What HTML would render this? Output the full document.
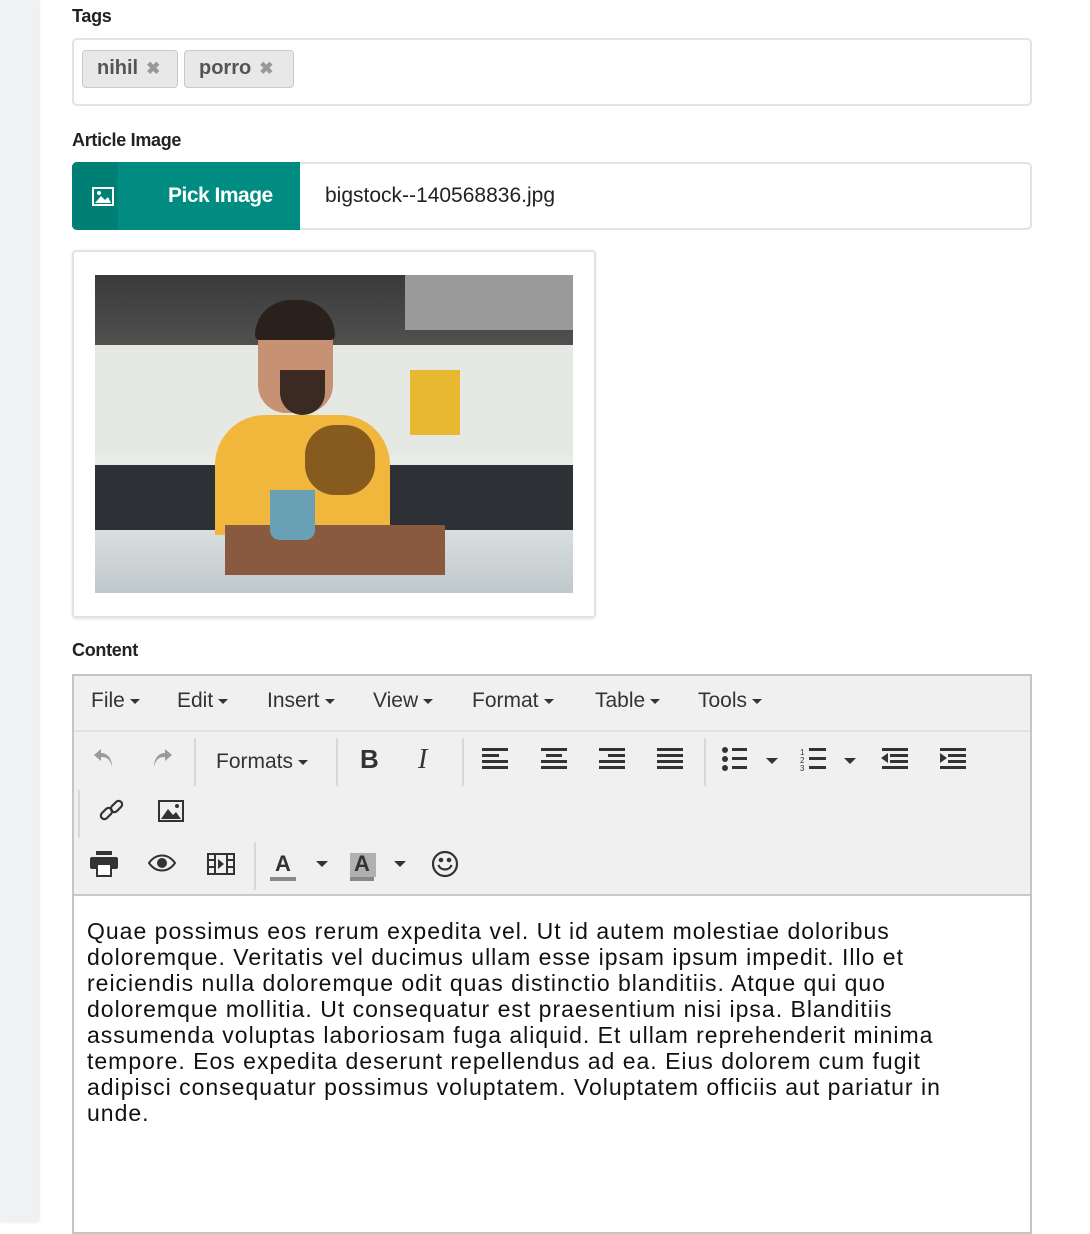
<!DOCTYPE html>
<html><head><meta charset="utf-8"><style>
*{margin:0;padding:0;box-sizing:border-box}
body{width:1090px;height:1222px;overflow:hidden;background:#fff;font-family:"Liberation Sans",sans-serif;position:relative}
.side{position:absolute;left:0;top:0;width:38px;height:1222px;background:#eef2f5;box-shadow:1px 0 3px rgba(0,0,0,.12)}
.abs{position:absolute}
.lbl{position:absolute;left:72px;font-size:18px;font-weight:bold;color:#222;letter-spacing:-0.3px}
.tag{position:absolute;top:50px;height:38px;background:#e8e8e8;border:1px solid #c9c9c9;border-radius:4px;font-size:20px;color:#555;padding:6px 0 0 14px;font-weight:bold}
.tag b{color:#999;font-size:17px;margin-left:8px}
.menu span{position:absolute;top:689px;font-size:21px;color:#333}
.caret{display:inline-block;width:0;height:0;border-left:5px solid transparent;border-right:5px solid transparent;border-top:5px solid #333;vertical-align:middle;margin-left:5px}
.sep{position:absolute;width:2px;background:#d8d8d8}
svg{position:absolute}
</style></head><body>
<div class="side"></div>
<div class="lbl" style="top:6px">Tags</div>
<div class="abs" style="left:72px;top:38px;width:960px;height:68px;border:2px solid #e2e2e2;border-radius:5px"></div>
<div class="tag" style="left:82px;width:96px">nihil<b>✖</b></div>
<div class="tag" style="left:184px;width:110px">porro<b>✖</b></div>
<div class="lbl" style="top:130px">Article Image</div>
<div class="abs" style="left:72px;top:162px;width:960px;height:68px;border:2px solid #e2e2e2;border-radius:5px"></div>
<div class="abs" style="left:72px;top:162px;width:228px;height:68px;background:#008c80;border-radius:5px 0 0 5px"></div>
<div class="abs" style="left:72px;top:162px;width:46px;height:68px;background:#007f74;border-radius:5px 0 0 5px"></div>
<svg style="left:92px;top:187px" width="22" height="19" viewBox="0 0 22 19"><rect x="1" y="1" width="20" height="17" fill="none" stroke="#fff" stroke-width="2"/><path d="M3 16 L9 9 L13 13 L16 10 L19 16Z" fill="#fff"/><circle cx="7" cy="6" r="2" fill="#fff"/></svg>
<div class="abs" style="left:168px;top:184px;color:#fff;font-size:21px;font-weight:bold;letter-spacing:-0.5px">Pick Image</div>
<div class="abs" style="left:325px;top:184px;color:#222;font-size:21px">bigstock--140568836.jpg</div>
<div class="abs" style="left:72px;top:250px;width:524px;height:368px;border:2px solid #e2e2e2;border-radius:4px;box-shadow:0 1px 3px rgba(0,0,0,.1)"></div>
<div class="abs" style="left:95px;top:275px;width:478px;height:318px;overflow:hidden;background:#e9ece8">
 <div class="abs" style="left:0;top:0;width:478px;height:70px;background:linear-gradient(#3a3a3a,#505050)"></div>
 <div class="abs" style="left:310px;top:0;width:168px;height:55px;background:#9a9a9a"></div>
 <div class="abs" style="left:0;top:70px;width:478px;height:110px;background:#e6e8e4"></div>
 <div class="abs" style="left:0;top:190px;width:478px;height:70px;background:#2d3035"></div>
 <div class="abs" style="left:0;top:255px;width:478px;height:63px;background:linear-gradient(#d9dfe0,#bfc8cb)"></div>
 <div class="abs" style="left:315px;top:95px;width:50px;height:65px;background:#e8b830"></div>
 <div class="abs" style="left:120px;top:140px;width:175px;height:120px;background:#f0b73c;border-radius:50px 50px 0 0"></div>
 <div class="abs" style="left:163px;top:28px;width:75px;height:110px;background:#c79273;border-radius:40px 40px 30px 30px"></div>
 <div class="abs" style="left:160px;top:25px;width:80px;height:40px;background:#2a211c;border-radius:40px 40px 5px 5px"></div>
 <div class="abs" style="left:185px;top:95px;width:45px;height:45px;background:#3a2a22;border-radius:0 0 25px 25px"></div>
 <div class="abs" style="left:130px;top:250px;width:220px;height:50px;background:#8a5a40"></div>
 <div class="abs" style="left:175px;top:215px;width:45px;height:50px;background:#6aa0b5;border-radius:0 0 10px 10px"></div>
 <div class="abs" style="left:210px;top:150px;width:70px;height:70px;background:rgba(90,50,20,.7);border-radius:30px"></div>
</div>
<div class="lbl" style="top:640px">Content</div>
<div class="abs" style="left:72px;top:674px;width:960px;height:560px;border:2px solid #c5c5c5"></div>
<div class="abs" style="left:74px;top:676px;width:956px;height:220px;background:#f0f0f0;border-bottom:2px solid #c9c9c9"></div>
<div class="abs" style="left:74px;top:730px;width:956px;height:2px;background:#e2e2e2"></div>
<div class="menu">
<span style="left:91px">File<i class="caret"></i></span>
<span style="left:177px">Edit<i class="caret"></i></span>
<span style="left:267px">Insert<i class="caret"></i></span>
<span style="left:373px">View<i class="caret"></i></span>
<span style="left:472px">Format<i class="caret"></i></span>
<span style="left:595px">Table<i class="caret"></i></span>
<span style="left:698px">Tools<i class="caret"></i></span>
</div>
<div class="sep" style="left:194px;top:738px;height:48px"></div>
<div class="sep" style="left:336px;top:738px;height:48px"></div>
<div class="sep" style="left:462px;top:738px;height:48px"></div>
<div class="sep" style="left:704px;top:738px;height:48px"></div>
<div class="sep" style="left:78px;top:790px;height:48px"></div>
<div class="sep" style="left:254px;top:842px;height:48px"></div>
<svg style="left:92px;top:747px" width="24" height="22" viewBox="0 0 24 22"><path d="M9 2 L2 8 L9 14 L9 10 C15 10 18 12 20 20 C20 12 16 6 9 6Z" fill="#9a9a9a"/></svg>
<svg style="left:150px;top:747px" width="24" height="22" viewBox="0 0 24 22"><path d="M15 2 L22 8 L15 14 L15 10 C9 10 6 12 4 20 C4 12 8 6 15 6Z" fill="#9a9a9a"/></svg>
<div class="abs" style="left:216px;top:750px;font-size:21px;color:#333">Formats<i class="caret"></i></div>
<div class="abs" style="left:360px;top:744px;font-size:26px;font-weight:bold;color:#333">B</div>
<div class="abs" style="left:418px;top:744px;font-size:28px;font-style:italic;font-family:'Liberation Serif',serif;color:#333">I</div>
<svg style="left:482px;top:748px" width="210" height="22" viewBox="0 0 210 22" fill="#333">
<rect x="0" y="0" width="26" height="3"/><rect x="0" y="6" width="17" height="3"/><rect x="0" y="12" width="26" height="3"/><rect x="0" y="18" width="26" height="3"/>
<rect x="59" y="0" width="26" height="3"/><rect x="64" y="6" width="16" height="3"/><rect x="59" y="12" width="26" height="3"/><rect x="59" y="18" width="26" height="3"/>
<rect x="117" y="0" width="26" height="3"/><rect x="126" y="6" width="17" height="3"/><rect x="117" y="12" width="26" height="3"/><rect x="117" y="18" width="26" height="3"/>
<rect x="175" y="0" width="26" height="3"/><rect x="175" y="6" width="26" height="3"/><rect x="175" y="12" width="26" height="3"/><rect x="175" y="18" width="26" height="3"/>
</svg>
<svg style="left:720px;top:746px" width="260" height="26" viewBox="0 0 260 26" fill="#333">
<circle cx="5" cy="4" r="3"/><circle cx="5" cy="13" r="3"/><circle cx="5" cy="22" r="3"/><rect x="12" y="2" width="15" height="3"/><rect x="12" y="11" width="15" height="3"/><rect x="12" y="20" width="15" height="3"/>
<path d="M46 12 L58 12 L52 18Z"/>
<text x="80" y="9" font-size="8" font-family="Liberation Sans">1</text><text x="80" y="17" font-size="8" font-family="Liberation Sans">2</text><text x="80" y="25" font-size="8" font-family="Liberation Sans">3</text>
<rect x="89" y="2" width="17" height="3"/><rect x="89" y="11" width="17" height="3"/><rect x="89" y="20" width="17" height="3"/>
<path d="M124 12 L136 12 L130 18Z"/>
<rect x="162" y="2" width="26" height="3"/><rect x="170" y="8" width="18" height="3"/><rect x="170" y="14" width="18" height="3"/><rect x="162" y="20" width="26" height="3"/><path d="M168 7 L161 12 L168 17Z"/>
<rect x="220" y="2" width="26" height="3"/><rect x="228" y="8" width="18" height="3"/><rect x="228" y="14" width="18" height="3"/><rect x="220" y="20" width="26" height="3"/><path d="M220 7 L227 12 L220 17Z"/>
</svg>
<svg style="left:98px;top:797px" width="28" height="28" viewBox="0 0 28 28" fill="none" stroke="#333" stroke-width="2.2"><rect x="2" y="13" width="13" height="7" rx="3.5" transform="rotate(-45 8.5 16.5)"/><rect x="12" y="6" width="13" height="7" rx="3.5" transform="rotate(-45 18.5 9.5)"/></svg>
<svg style="left:158px;top:800px" width="26" height="22" viewBox="0 0 26 22"><rect x="1" y="1" width="24" height="20" fill="none" stroke="#333" stroke-width="2"/><path d="M3 19 L10 9 L15 15 L18 12 L23 19Z" fill="#333"/><circle cx="19" cy="6" r="2" fill="#333"/></svg>
<svg style="left:90px;top:851px" width="28" height="26" viewBox="0 0 28 26" fill="#333"><rect x="6" y="0" width="16" height="4"/><rect x="0" y="6" width="28" height="12" rx="2"/><rect x="7" y="13" width="14" height="12" fill="#fff" stroke="#333" stroke-width="2"/></svg>
<svg style="left:148px;top:853px" width="28" height="20" viewBox="0 0 28 20"><path d="M1 10 C8 0 20 0 27 10 C20 20 8 20 1 10Z" fill="none" stroke="#333" stroke-width="2"/><circle cx="14" cy="10" r="5" fill="#333"/></svg>
<svg style="left:207px;top:853px" width="28" height="22" viewBox="0 0 28 22"><rect x="1" y="1" width="26" height="20" fill="none" stroke="#333" stroke-width="2"/><rect x="7" y="1" width="2" height="20" fill="#333"/><rect x="19" y="1" width="2" height="20" fill="#333"/><path d="M11 6 L17 11 L11 16Z" fill="#333"/><rect x="1" y="6" width="6" height="2" fill="#333"/><rect x="1" y="13" width="6" height="2" fill="#333"/><rect x="21" y="6" width="6" height="2" fill="#333"/><rect x="21" y="13" width="6" height="2" fill="#333"/></svg>
<div class="abs" style="left:275px;top:851px;font-size:22px;font-weight:bold;color:#333">A</div>
<div class="abs" style="left:270px;top:877px;width:26px;height:4px;background:#888"></div>
<svg style="left:316px;top:861px" width="12" height="8"><path d="M0 0 L12 0 L6 6Z" fill="#333"/></svg>
<div class="abs" style="left:350px;top:853px;width:26px;height:24px;background:#b0b0b0"></div>
<div class="abs" style="left:354px;top:851px;font-size:22px;font-weight:bold;color:#333">A</div>
<div class="abs" style="left:350px;top:877px;width:24px;height:4px;background:#888"></div>
<svg style="left:394px;top:861px" width="12" height="8"><path d="M0 0 L12 0 L6 6Z" fill="#333"/></svg>
<svg style="left:431px;top:850px" width="28" height="28" viewBox="0 0 28 28" fill="none" stroke="#333" stroke-width="2.2"><circle cx="14" cy="14" r="12"/><circle cx="10" cy="10" r="1.2" fill="#333"/><circle cx="18" cy="10" r="1.2" fill="#333"/><path d="M7.5 15 C9.5 21 18.5 21 20.5 15" /></svg>
<div class="abs" style="left:87px;top:918px;width:890px;font-size:23px;line-height:26px;letter-spacing:1px;color:#111">Quae possimus eos rerum expedita vel. Ut id autem molestiae doloribus doloremque. Veritatis vel ducimus ullam esse ipsam ipsum impedit. Illo et reiciendis nulla doloremque odit quas distinctio blanditiis. Atque qui quo doloremque mollitia. Ut consequatur est praesentium nisi ipsa. Blanditiis assumenda voluptas laboriosam fuga aliquid. Et ullam reprehenderit minima tempore. Eos expedita deserunt repellendus ad ea. Eius dolorem cum fugit adipisci consequatur possimus voluptatem. Voluptatem officiis aut pariatur in unde.</div>
</body></html>
